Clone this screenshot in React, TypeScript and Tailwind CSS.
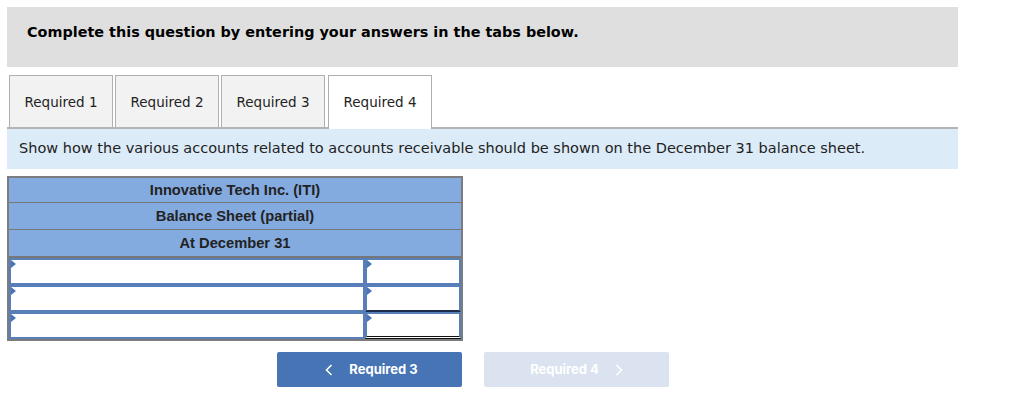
import React from "react";

const tabs = ["Required 1", "Required 2", "Required 3", "Required 4"];

function Marker() {
  return (
    <span className="absolute left-0 top-0 h-0 w-0 border-y-[4px] border-l-[5px] border-y-transparent border-l-[#4a74b6]" />
  );
}

export default function App() {
  return (
    <div className="w-[1024px] h-[411px] bg-white pt-[7px] pl-[7px]" style={{ fontFamily: "Verdana, 'DejaVu Sans', sans-serif" }}>
      <div className="w-[951px] h-[60px] bg-[#dfdfdf] flex items-center pl-[20px] pb-[9px]">
        <span className="text-[14.4px] font-bold text-black">Complete this question by entering your answers in the tabs below.</span>
      </div>

      {/* Tabs */}
      <div className="mt-[8px] w-[951px] flex border-b-2 border-b-[#b4b4b4] pl-[2px] gap-[2px]">
        {tabs.map((t, i) => (
          <div
            key={t}
            className={
              i === 3
                ? "ml-[1px] w-[104px] h-[54px] -mb-[2px] pb-[1px] bg-white border border-b-0 border-[#b0b0b0] flex items-center justify-center text-[13.5px] text-[#222]"
                : "w-[104px] h-[52px] pt-[1px] bg-[#f2f2f2] border border-b-0 border-[#b0b0b0] flex items-center justify-center text-[13.5px] text-[#222]"
            }
          >
            {t}
          </div>
        ))}
      </div>

      <div className="w-[951px] h-[40px] bg-[#dcebf8] flex items-center pl-[12px]">
        <span className="text-[14.5px] text-[#222]">Show how the various accounts related to accounts receivable should be shown on the December 31 balance sheet.</span>
      </div>

      {/* Table */}
      <div className="mt-[7px] w-[456px] border-2 border-[#7c7c7c]" style={{ fontFamily: "Arial, 'Liberation Sans', sans-serif" }}>
        {["Innovative Tech Inc. (ITI)", "Balance Sheet (partial)", "At December 31"].map((h, i) => (
          <div
            key={h}
            className={
              "bg-[#84abe0] flex items-center justify-center text-[14.7px] font-bold text-[#222] " +
              (i === 0 ? "h-[25px] border-b border-[#777]" : i === 1 ? "h-[27px] border-b border-[#777]" : "h-[28px] border-b-2 border-[#777]")
            }
          >
            {h}
          </div>
        ))}
        {[0, 1, 2].map((r) => (
          <div key={r} className="flex h-[27px] bg-[#f4f4f4]">
            <div className="relative w-[356px] bg-white border-2 border-[#587fb8]">
              <Marker />
            </div>
            <div
              className={
                "relative flex-1 bg-white border-2 border-[#587fb8] " +
                (r === 1 ? "border-b-[#1d2e4a]" : "") +
                (r === 2 ? "border-b-[3px] border-b-[#111] border-double" : "")
              }
            >
              <Marker />
            </div>
          </div>
        ))}
      </div>

      {/* Nav buttons */}
      <div className="mt-[11px] flex gap-[22px] pl-[270px]" style={{ fontFamily: "Inter, 'Liberation Sans', sans-serif" }}>
        <button className="w-[185px] h-[35px] rounded-[2px] bg-[#4674b4] text-white text-[13px] font-bold flex items-center justify-center gap-[16px] pl-[4px]">
          <svg width="8" height="12" viewBox="0 0 8 12" fill="none" stroke="white" strokeWidth="1.6">
            <path d="M6.5 1 L1.5 6 L6.5 11" />
          </svg>
          <span>Required 3</span>
        </button>
        <button className="w-[185px] h-[35px] rounded-[2px] bg-[#dae3ef] text-white text-[13px] font-bold flex items-center justify-center gap-[16px]">
          <span>Required 4</span>
          <svg width="8" height="12" viewBox="0 0 8 12" fill="none" stroke="white" strokeWidth="1.6">
            <path d="M1.5 1 L6.5 6 L1.5 11" />
          </svg>
        </button>
      </div>
    </div>
  );
}
